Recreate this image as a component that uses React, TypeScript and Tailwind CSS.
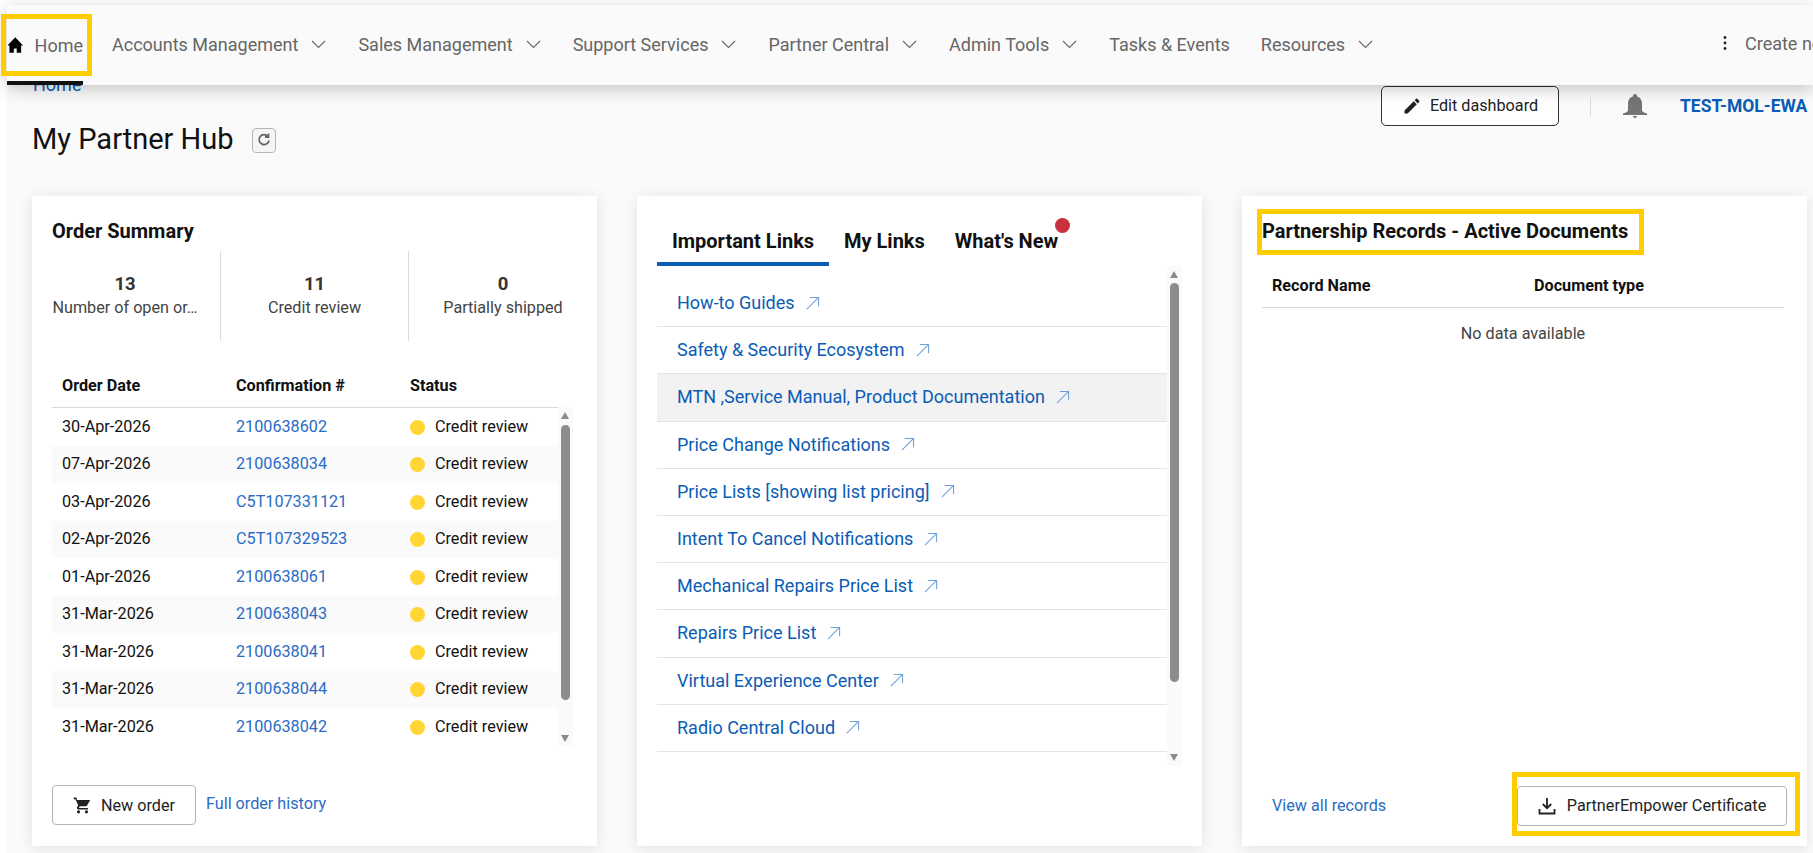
import React from "react";

const font = { fontFamily: "Roboto, sans-serif" };

function Chevron() {
  return (
    <svg width="15" height="9" viewBox="0 0 15 9" fill="none" stroke="#666" strokeWidth="1.1">
      <path d="M1 1l6.5 6.5L14 1" />
    </svg>
  );
}

function HomeIcon() {
  return (
    <svg width="17" height="18" viewBox="0 0 17 18" fill="#000">
      <path d="M8.5 1L0.500 9.500h2V17h4.500v-4.500h3V17h4.500V9.500h2z" />
    </svg>
  );
}

function Arrow() {
  return (
    <svg width="14" height="14" viewBox="0 0 15 15" fill="none" stroke="#6f9fdc" strokeWidth="1.1">
      <path d="M1 14L13.5 1.5M4 1.5h9.5V11" />
    </svg>
  );
}

function Scroll({ thumb, down, top }: { thumb: string; down: string; top: string }) {
  return (
    <div className={`absolute right-0 ${top} ${down} w-[15px] bg-[#fafafa]`}>
      <div className="absolute left-[3px] top-[5px] w-0 h-0 border-x-[4.5px] border-x-transparent border-b-[7px] border-b-[#8c8c8c]" />
      <div className={`absolute left-[3px] w-[9px] rounded-full bg-[#8c8c8c] ${thumb}`} />
      <div className="absolute left-[3px] bottom-[4px] w-0 h-0 border-x-[4.5px] border-x-transparent border-t-[7px] border-t-[#8c8c8c]" />
    </div>
  );
}

const navItems: [string, boolean][] = [
  ["Accounts Management", true],
  ["Sales Management", true],
  ["Support Services", true],
  ["Partner Central", true],
  ["Admin Tools", true],
  ["Tasks & Events", false],
  ["Resources", true],
];

const orders = [
  ["30-Apr-2026", "2100638602"],
  ["07-Apr-2026", "2100638034"],
  ["03-Apr-2026", "C5T107331121"],
  ["02-Apr-2026", "C5T107329523"],
  ["01-Apr-2026", "2100638061"],
  ["31-Mar-2026", "2100638043"],
  ["31-Mar-2026", "2100638041"],
  ["31-Mar-2026", "2100638044"],
  ["31-Mar-2026", "2100638042"],
];

const links = [
  "How-to Guides",
  "Safety & Security Ecosystem",
  "MTN ,Service Manual, Product Documentation",
  "Price Change Notifications",
  "Price Lists [showing list pricing]",
  "Intent To Cancel Notifications",
  "Mechanical Repairs Price List",
  "Repairs Price List",
  "Virtual Experience Center",
  "Radio Central Cloud",
];

const stats = [
  ["13", "Number of open or…", "-ml-[1px] w-[148px] mr-[21px]"],
  ["11", "Credit review", "w-[188px] border-l border-[#dcdcdc]"],
  ["0", "Partially shipped", "w-[189px] border-l border-[#dcdcdc]"],
];

export default function App() {
  return (
    <div className="h-[853px] overflow-hidden bg-white pl-[7px] pt-[5px] text-[16.2px]" style={font}>
      <div className="h-full bg-[#fafafa]">
        <nav className="relative z-10 flex h-[80px] items-center bg-[#fafafa] shadow-[0_4px_16px_rgba(0,0,0,0.22)] whitespace-nowrap text-[18px] text-[#666]">
          <div className="relative flex h-full w-[76px] items-center gap-[11px]">
            <HomeIcon />
            <span>Home</span>
            <div className="absolute bottom-0 left-0 h-[4px] w-full bg-[#111]" />
            <div className="absolute left-[-6px] top-[9px] h-[62px] w-[91px] border-[5px] border-[#ffcc00]" />
          </div>
          <div className="ml-[29px] flex items-center pb-[2px]">
            {navItems.map(([label, chev]) => (
              <div key={label} className={`${chev ? "mr-[32px]" : "mr-[31px]"} flex items-center gap-[13px]`}>
                <span>{label}</span>
                {chev && <Chevron />}
              </div>
            ))}
          </div>
          <div className="ml-auto flex items-center gap-[18px] pb-[4px] pl-[20px]">
            <svg width="4" height="16" viewBox="0 0 4 16" fill="#222">
              <circle cx="2" cy="2.500" r="1.400" />
              <circle cx="2" cy="8" r="1.400" />
              <circle cx="2" cy="13.500" r="1.400" />
            </svg>
            <span className="w-[68px] overflow-hidden">Create new</span>
          </div>
        </nav>

        <header className="flex h-[111px] items-start justify-between pl-[26px] pr-[6px]">
          <div>
            <a className="-mt-[14px] block text-[18px] text-[#0a5cb5]">Home</a>
            <div className="mt-[23px] flex items-center gap-[18px]">
              <h1 className="-ml-[1px] text-[29px] leading-[36px] text-[#111]">My Partner Hub</h1>
              <button className="mt-[2px] flex h-[25px] w-[24px] items-center justify-center rounded-[4px] border border-[#b5b5b5] bg-[#f5f5f5]">
                <svg width="14" height="14" viewBox="0 0 14 14" fill="none" stroke="#666" strokeWidth="1.800">
                  <path d="M11 3.500A5 5 0 1 0 12 7.500" />
                  <path d="M11.500 0.500v3.500h-3.500" />
                </svg>
              </button>
            </div>
          </div>
          <div className="flex items-center pt-[1px]">
            <button className="flex h-[40px] w-[178px] items-center justify-center gap-[8px] rounded-[5px] border border-[#333] bg-white text-[#222]">
              <svg width="20" height="20" viewBox="0 0 24 24" fill="#222">
                <path d="M3 17.25V21h3.75L17.81 9.94l-3.75-3.75L3 17.25zM20.71 7.04a1 1 0 0 0 0-1.41l-2.34-2.34a1 1 0 0 0-1.41 0l-1.83 1.83 3.75 3.75 1.83-1.83z" />
              </svg>
              Edit dashboard
            </button>
            <div className="ml-[31px] h-[19px] w-px bg-[#dcdcdc]" />
            <svg className="ml-[31px]" width="26" height="26" viewBox="0 0 26 26" fill="#757575">
              <path d="M13 1a2 2 0 0 0-2 2v.6C7.500 4.600 6 7.500 6 11v6c0 1.500-1.500 2.500-5 3.500V22h24v-1.500c-3.500-1-5-2-5-3.500v-6c0-3.500-1.500-6.400-5-7.400V3a2 2 0 0 0-2-2z" />
              <path d="M10.500 23h5L13 25.500z" />
            </svg>
            <span className="ml-[32px] w-[127px] whitespace-nowrap text-[17.5px] font-bold text-[#0a5cb5]">TEST-MOL-EWA</span>
          </div>
        </header>

        <main className="flex gap-[40px] pl-[25px]">
          <section className="relative h-[650px] w-[565px] bg-white px-[20px] shadow-[0_2px_14px_rgba(0,0,0,0.1)]">
            <h2 className="pt-[23px] text-[20px] font-bold leading-[24px] text-[#111]">Order Summary</h2>
            <div className="mt-[8px] -mr-[20px] flex h-[90px] text-center">
              {stats.map(([n, label, cls]) => (
                <div key={n} className={`pt-[21px] ${cls}`}>
                  <div className="text-[18.5px] font-bold leading-[24px] text-[#333]">{n}</div>
                  <div className="truncate leading-[24px] text-[#444]">{label}</div>
                </div>
              ))}
            </div>
            <div className="mt-[27px] flex h-[40.4px] w-[506px] items-center border-b border-[#d9d9d9] pb-[3px] font-bold text-[#111]">
              <div className="w-[184px] pl-[10px]">Order Date</div>
              <div className="w-[174px]">Confirmation #</div>
              <div>Status</div>
            </div>
            <div className="w-[506px]">
              {orders.map(([date, id], i) => (
                <div key={i} className={`flex h-[37.5px] items-center text-[#111] ${i % 2 ? "bg-[#fafafa]" : "bg-white"}`}>
                  <div className="w-[184px] pl-[10px]">{date}</div>
                  <div className="w-[174px] text-[#2a6cc4]">{id}</div>
                  <div className="flex items-center gap-[10px]">
                    <span className="h-[15px] w-[15px] rounded-full bg-[#ffd633]" />
                    Credit review
                  </div>
                </div>
              ))}
            </div>
            <Scroll top="top-[211px]" down="h-[339px] mr-[24px]" thumb="top-[18px] h-[275px]" />
            <div className="mt-[39.6px] flex items-start gap-[10px]">
              <button className="flex h-[40px] w-[144px] items-center justify-center gap-[9px] rounded-[4px] border border-[#b3b3b3] bg-white pt-[1px] text-[#222]">
                <svg width="19" height="19" viewBox="0 0 24 24" fill="#222">
                  <path d="M7 18a2 2 0 1 0 0 4 2 2 0 0 0 0-4zM17 18a2 2 0 1 0 0 4 2 2 0 0 0 0-4zM1 2v2h2l3.600 7.590-1.350 2.450C5.090 14.320 5 14.650 5 15c0 1.100.9 2 2 2h12v-2H7.420l1.100-2h7.450c.75 0 1.410-.41 1.750-1.030L21.700 5H5.210l-.94-3H1z" />
                </svg>
                New order
              </button>
              <a className="pt-[7px] text-[#2a6cc4]">Full order history</a>
            </div>
          </section>

          <section className="relative h-[650px] w-[565px] bg-white pl-[20px] shadow-[0_2px_14px_rgba(0,0,0,0.1)]">
            <div className="flex h-[70px] items-end text-[20px] font-bold text-[#111]">
              <div className="flex h-[36px] w-[172px] justify-center border-b-4 border-[#0a5cb5] leading-[22px]">Important Links</div>
              <div className="ml-[15px] h-[36px] leading-[22px]">My Links</div>
              <div className="relative ml-[30px] h-[36px] leading-[22px]">
                What's New
                <span className="absolute right-[-12px] top-[-12px] h-[15px] w-[15px] rounded-full bg-[#c8323c]" />
              </div>
            </div>
            <div className="mt-[14px] w-[510px] text-[18px] text-[#0a5cb5]">
              {links.map((l, i) => (
                <div key={l} className={`flex h-[47.2px] items-center gap-[11px] border-b border-[#e3e3e3] pl-[20px] pb-[1px] ${i === 2 ? "bg-[#f2f2f2]" : ""}`}>
                  <span>{l}</span>
                  <Arrow />
                </div>
              ))}
            </div>
            <Scroll top="top-[70px]" down="h-[499px] mr-[20px]" thumb="top-[17px] h-[399px]" />
          </section>

          <section className="relative h-[650px] w-[565px] bg-white px-[20px] shadow-[0_2px_14px_rgba(0,0,0,0.1)]">
            <div className="absolute left-[15px] top-[13px] h-[46px] w-[387px] border-[5px] border-[#ffcc00]" />
            <h2 className="pt-[23px] text-[20px] font-bold leading-[24px] text-[#111]">Partnership Records - Active Documents</h2>
            <div className="mr-[3px] mt-[22px] flex h-[43px] items-center border-b border-[#d9d9d9] font-bold text-[#111]">
              <div className="w-[272px] pl-[10px]">Record Name</div>
              <div>Document type</div>
            </div>
            <div className="mr-[3px] pt-[14px] text-center text-[#444]">No data available</div>
            <div className="absolute bottom-[20px] left-[30px] right-[20px] flex items-center justify-between">
              <a className="text-[#2a6cc4]">View all records</a>
              <div className="relative">
                <button className="flex h-[40px] w-[270px] items-center justify-center gap-[11px] rounded-[4px] border border-[#b3b3b3] bg-white text-[#222]">
                  <svg width="18" height="18" viewBox="0 0 18 18" fill="none" stroke="#222" strokeWidth="1.800">
                    <path d="M9 1v10M4.800 7L9 11.200 13.200 7M1.500 12v4.500h15V12" />
                  </svg>
                  PartnerEmpower Certificate
                </button>
                <div className="absolute left-[-5px] top-[-14px] h-[64px] w-[288px] border-[5px] border-[#ffcc00]" />
              </div>
            </div>
          </section>
        </main>
      </div>
    </div>
  );
}
